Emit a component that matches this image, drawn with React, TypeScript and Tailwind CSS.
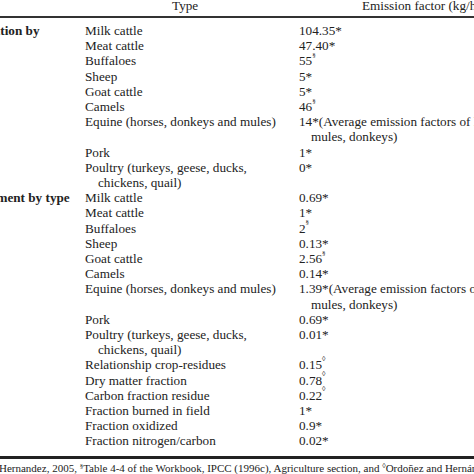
import React from "react";

type Row = { group?: React.ReactNode; type: React.ReactNode; value: React.ReactNode };

const S = () => <sup className="text-[7px] align-[5px]">§</sup>;
const D = () => <sup className="text-[7px] align-[5px]">◊</sup>;

const livestock = (group: React.ReactNode, v: React.ReactNode[]): Row[] => [
  { group, type: "Milk cattle", value: v[0] },
  { type: "Meat cattle", value: v[1] },
  { type: "Buffaloes", value: v[2] },
  { type: "Sheep", value: v[3] },
  { type: "Goat cattle", value: v[4] },
  { type: "Camels", value: v[5] },
  { type: "Equine (horses, donkeys and mules)", value: v[6] },
  { type: "Pork", value: v[7] },
  { type: <>Poultry (turkeys, geese, ducks,<br />chickens, quail)</>, value: v[8] },
];

const rows: Row[] = [
  ...livestock(<>Enteric fermentation by<br />type</>, [
    "104.35*",
    "47.40*",
    <>55<S /></>,
    "5*",
    "5*",
    <>46<S /></>,
    <>14*(Average emission factors of horses,<br />mules, donkeys)</>,
    "1*",
    "0*",
  ]),
  ...livestock("Manure management by type", [
    "0.69*",
    "1*",
    <>2<S /></>,
    "0.13*",
    <>2.56<S /></>,
    "0.14*",
    <>1.39*(Average emission factors of horses,<br />mules, donkeys)</>,
    "0.69*",
    "0.01*",
  ]),
  { type: "Relationship crop-residues", value: <>0.15<D /></> },
  { type: "Dry matter fraction", value: <>0.78<D /></> },
  { type: "Carbon fraction residue", value: <>0.22<D /></> },
  { type: "Fraction burned in field", value: "1*" },
  { type: "Fraction oxidized", value: "0.9*" },
  { type: "Fraction nitrogen/carbon", value: "0.02*" },
];

export default function App() {
  return (
    <div className="w-[474px] h-[474px] overflow-hidden bg-white text-[#222] text-[13.2px] leading-[15.2px]" style={{ fontFamily: '"Liberation Serif", "Times New Roman", serif' }}>
      <div className="-ml-[96px] w-[900px]">
        {/* header */}
        <div className="flex h-[16px] items-end pb-[3px]">
          <div className="w-[181px]" />
          <div className="w-[214px] pl-[87px]">Type</div>
          <div className="pl-[63px]">Emission factor (kg/head/year)</div>
        </div>
        <div className="border-t-2 border-[#333]" />

        <div className="pt-[5px] pb-[7px]">
          {rows.map((r, i) => (
            <div key={i} className="flex items-start">
              <div className="w-[181px] h-[15.2px] font-bold">{r.group}</div>
              <div className="w-[214px] pl-[13px] -indent-[13px]">{r.type}</div>
              <div className="flex-1 pl-[12px] -indent-[12px]">{r.value}</div>
            </div>
          ))}
        </div>

        <div className="border-t-[3px] border-[#222]" />
        <div className="pt-[3px] text-[11px] leading-[13px] whitespace-nowrap pl-[95px]">
          Hernandez, 2005, <sup className="text-[7px]">§</sup>Table 4-4 of the Workbook, IPCC (1996c), Agriculture section, and <sup className="text-[7px]">◊</sup>Ordoñez and Hernández, 2005
        </div>
      </div>
    </div>
  );
}
